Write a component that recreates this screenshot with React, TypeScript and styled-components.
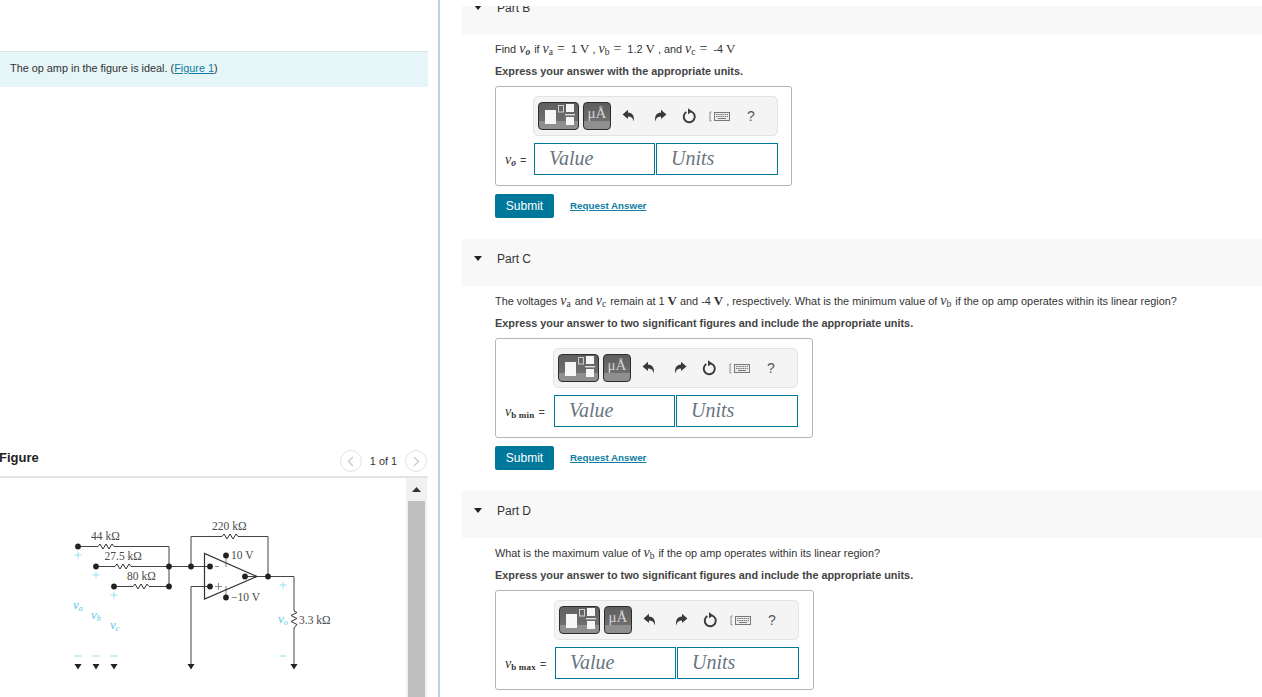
import React from "react";
import styled, { createGlobalStyle } from "styled-components";

const Global = createGlobalStyle`
  html, body { margin: 0; padding: 0; height: 100%; overflow: hidden; background: #fff; }
  #root { height: 697px; }
  * { box-sizing: border-box; }
`;

const Page = styled.div`
  display: flex;
  width: 1262px;
  height: 697px;
  overflow: hidden;
  font-family: "Liberation Sans", Arial, sans-serif;
  color: #333;
`;
const LeftColumn = styled.div`
  flex: none;
  width: 438px;
  display: flex;
  flex-direction: column;
  padding-top: 51px;
`;
const Banner = styled.div`
  width: 428px;
  height: 36px;
  padding: 0 0 4px 10px;
  display: flex;
  align-items: center;
  background: #e6f5f7;
  border-top: 1px solid #dde3e6;
  font-size: 10.86px;
  color: #333;
  white-space: pre;
`;
const FigureLink = styled.a`
  color: #0f7ea3;
  text-decoration: underline;
`;
const FigureHeader = styled.div`
  width: 428px;
  height: 31px;
  margin-top: auto;
  display: flex;
  align-items: center;
  border-bottom: 2px solid #e4e4e4;
`;
const FigureTitle = styled.div`
  font-size: 13px;
  font-weight: 700;
  color: #222;
  flex: 1;
  margin: -9px 0 0 -1px;
`;
const Pager = styled.div`
  display: flex;
  align-items: center;
  font-size: 10.86px;
  color: #333;
  gap: 8px;
  margin: 0 1px 1px 0;
`;
const RoundButton = styled.div`
  width: 22px;
  height: 22px;
  border-radius: 50%;
  border: 1px solid #e2e2e2;
  display: flex;
  align-items: center;
  justify-content: center;
  background: #fff;
`;
const FigureBody = styled.div`
  width: 427px;
  height: 219px;
  display: flex;
`;
const FigureCanvas = styled.div`
  flex: 1;
  overflow: hidden;
`;
const Scrollbar = styled.div`
  flex: none;
  width: 21px;
  background: #f1f1f1;
  display: flex;
  flex-direction: column;
  align-items: center;
`;
const ScrollArrow = styled.div`
  height: 23px;
  display: flex;
  align-items: center;
  justify-content: center;
`;
const ScrollThumb = styled.div`
  flex: 1;
  width: 17px;
  background: #bfbfbf;
`;
const Divider = styled.div`
  flex: none;
  width: 2px;
  background: #bcd2e2;
`;
const RightColumn = styled.div`
  flex: 1;
  padding: 6px 0 0 22px;
  min-width: 0;
`;
const RightClip = styled.div`
  height: 691px;
  overflow: hidden;
`;
const PartHeader = styled.div<{ $first?: boolean }>`
  height: 47px;
  margin-top: ${(p) => (p.$first ? "-18px" : "21px")};
  background: #f8f8f8;
  display: flex;
  align-items: center;
  padding: 0 0 8px 12px;
  gap: 15px;
  font-size: 12px;
  color: #333;
`;
const PartBody = styled.div`
  padding: 0 0 0 33px;
`;
const Question = styled.div<{ $top: number }>`
  margin-top: ${(p) => p.$top}px;
  height: 16px;
  line-height: 16px;
  font-size: 10.86px;
  white-space: nowrap;
  color: #333;
`;
const Instruction = styled.div`
  margin-top: 6px;
  height: 16px;
  line-height: 16px;
  font-size: 10.86px;
  font-weight: 700;
  color: #444;
  white-space: nowrap;
`;
const Serif = styled.span`
  font-family: "Liberation Serif", "Times New Roman", serif;
  font-size: 13px;
  color: #333;
`;
const MathEq = styled(Serif)`
  font-size: 14px;
  margin: 0 3px;
`;
const SerifBold = styled(Serif)`
  font-weight: 700;
`;
const MathVar = styled.span`
  font-family: "Liberation Serif", "Times New Roman", serif;
  font-style: italic;
  font-size: 14px;
  color: #333;
  margin-right: 1px;
`;
const MathSub = styled.sub`
  font-size: 9.5px;
  line-height: 0;
  vertical-align: -2px;
  font-style: normal;
  font-family: "Liberation Serif", serif;
`;
const MathSubItalic = styled(MathSub)`
  font-style: italic;
  font-weight: 700;
`;
const MathSubBold = styled(MathSub)`
  font-size: 9px;
  font-weight: 700;
  letter-spacing: 0.2px;
`;
const AnswerBox = styled.div<{ $width: number; $padRight: number }>`
  margin-top: 7px;
  width: ${(p) => p.$width}px;
  height: 100px;
  border: 1px solid #b5b5b5;
  border-radius: 3px;
  padding: 9px ${(p) => p.$padRight}px 0 9px;
  display: flex;
  flex-direction: column;
  align-items: flex-end;
`;
const Toolbar = styled.div`
  width: 245px;
  height: 40px;
  background: #f4f4f4;
  border: 1px solid #e3e3e3;
  border-radius: 5px;
  display: flex;
  align-items: center;
  padding-left: 4px;
`;
const ToolButton = styled.div<{ $w: number }>`
  width: ${(p) => p.$w}px;
  height: 28px;
  margin-right: 4px;
  border: 1px solid #2d2d2d;
  border-radius: 4px;
  background: linear-gradient(#5f5f5f 0, #6e6e6e 68%, #8f8f8f 68%, #8f8f8f 100%);
  display: flex;
  align-items: flex-start;
  justify-content: center;
  color: #d6d6d6;
  font-family: "Liberation Serif", serif;
  font-size: 15px;
  line-height: 20px;
`;
const ToolIcon = styled.div<{ $w: number }>`
  flex: none;
  width: ${(p) => p.$w}px;
  height: 24px;
  display: flex;
  align-items: center;
  justify-content: center;
  color: #555;
  font-size: 14px;
`;
const InputRow = styled.div`
  margin-top: 7px;
  display: flex;
  align-items: center;
  width: 100%;
`;
const VarLabel = styled.div`
  flex: 1;
  font-size: 10.86px;
  color: #444;
  white-space: nowrap;
  display: flex;
  align-items: center;
  gap: 3px;
  padding-top: 2px;
`;
const ValueField = styled.div<{ $w: number; $gap: number }>`
  width: ${(p) => p.$w}px;
  margin-left: ${(p) => p.$gap}px;
  height: 32px;
  border: 1px solid #00789b;
  padding: 0 0 2px 14px;
  display: flex;
  align-items: center;
  font-family: "Liberation Serif", "Times New Roman", serif;
  font-style: italic;
  font-size: 20px;
  color: #6a7480;
  background: #fff;
`;
const Actions = styled.div`
  margin-top: 8px;
  display: flex;
  align-items: center;
  gap: 16px;
`;
const Submit = styled.div`
  width: 59px;
  height: 24px;
  background: #00789b;
  border-radius: 2px;
  color: #fff;
  font-size: 12px;
  padding-bottom: 1px;
  display: flex;
  align-items: center;
  justify-content: center;
`;
const RequestLink = styled.a`
  font-size: 9.8px;
  font-weight: 700;
  color: #0f7ea3;
  text-decoration: underline;
  margin-top: -2px;
`;

const Caret = () => (
  <svg width="8" height="5" viewBox="0 0 8 5"><path d="M0 0h8L4 5z" fill="#222" /></svg>
);

const TemplateIcon = () => (
  <svg width="34" height="24" viewBox="0 0 34 24">
    <rect x="3" y="7" width="11" height="14" fill="#f6f6f6" />
    <rect x="16.5" y="2.5" width="5" height="6.5" fill="none" stroke="#cfcfcf" />
    <rect x="24" y="1" width="8" height="8" fill="#f6f6f6" />
    <rect x="23" y="11" width="10" height="1.4" fill="#dedede" />
    <rect x="24" y="14" width="8" height="8" fill="#f6f6f6" />
  </svg>
);

const UndoIcon = () => (
  <svg width="13" height="14" viewBox="0 0 12 13">
    <path d="M0.5 5 L5.5 0.8 V3.3 C9 3.3 11.6 5.8 11 11.5 C10 8.2 8.3 7 5.5 7 V9.4 Z" fill="#3a3a3a" />
  </svg>
);
const RedoIcon = () => (
  <svg width="13" height="14" viewBox="0 0 12 13">
    <path d="M11.5 5 L6.5 0.8 V3.3 C3 3.3 0.4 5.8 1 11.5 C2 8.2 3.7 7 6.5 7 V9.4 Z" fill="#3a3a3a" />
  </svg>
);
const ResetIcon = () => (
  <svg width="15" height="16" viewBox="0 0 14 15">
    <path d="M8.2 3.2 A5.2 5.2 0 1 1 4 3.8" fill="none" stroke="#3a3a3a" strokeWidth="1.8" />
    <path d="M5.6 0.2 L9.6 3.2 L5.6 5.8 Z" fill="#3a3a3a" />
  </svg>
);
const KeyboardIcon = () => (
  <svg width="21" height="11" viewBox="0 0 21 11">
    <path d="M2.5 1H1V10H2.5" fill="none" stroke="#8a8a8a" />
    <rect x="5.5" y="1.5" width="15" height="8" fill="#ececec" stroke="#777" />
    <path d="M7 3.5h12M7 5.5h12" stroke="#777" strokeWidth="1" strokeDasharray="1.5 0.7" />
    <path d="M9 7.5h8" stroke="#777" />
  </svg>
);

const Resistor = ({ x, y }: { x: number; y: number }) => (
  <path
    d={`M${x} ${y} l2 -2.5 l3 5 l3 -5 l3 5 l3 -5 l2 2.5`}
    fill="none"
    stroke="#333"
    strokeWidth="1"
  />
);
const Dot = ({ x, y }: { x: number; y: number }) => <circle cx={x} cy={y} r="2.9" fill="#222" />;
const Ground = ({ x }: { x: number }) => <path d={`M${x - 3.5} 664h7l-3.5 5.5z`} fill="#222" />;
const Plus = ({ x, y }: { x: number; y: number }) => (
  <path d={`M${x - 3.5} ${y}h7M${x} ${y - 3.5}v7`} stroke="#8fdcf2" strokeWidth="0.9" />
);
const Minus = ({ x, y }: { x: number; y: number }) => (
  <path d={`M${x - 3.5} ${y}h7`} stroke="#8fdcf2" strokeWidth="1" />
);

const CircuitLabel = styled.text`
  font-family: "Liberation Serif", serif;
  font-size: 11.5px;
  fill: #4a4a4a;
`;
const CircuitVar = styled.text`
  font-family: "Liberation Serif", serif;
  font-style: italic;
  font-size: 13px;
  fill: #58c6ea;
`;
const CircuitSub = styled.tspan`
  font-size: 8px;
`;

const Circuit = () => (
  <svg width="406" height="219" viewBox="0 478 406 219">
    <g fill="none" stroke="#444" strokeWidth="1">
      <path d="M78 546.5H98M114 546.5H169V586.5" />
      <path d="M96 566.5H115M131 566.5H210" />
      <path d="M114 586.5H133M149 586.5H169" />
      <path d="M191 566.5V536.5H222M238 536.5H268V576.5" />
      <path d="M210 586.5H191V664" />
      <path d="M245 576.5H294V611M294 628V664" />
      <path d="M226 555V567M226 586V597" stroke="#888" />
      <path d="M204.5 553.5V599L257 576.5Z" strokeWidth="1.2" stroke="#333" />
    </g>
    <Resistor x={98} y={546.5} />
    <Resistor x={115} y={566.5} />
    <Resistor x={133} y={586.5} />
    <Resistor x={222} y={536.5} />
    <path d="M294 611 l3 1.5 l-6 3 l6 3 l-6 3 l6 3 l-3 3.5" fill="none" stroke="#333" strokeWidth="1" />
    {[
      [78, 546], [96, 566], [114, 586], [169, 566], [169, 586], [191, 566], [210, 566], [210, 586],
      [245, 576], [268, 576], [226, 555], [226, 597],
    ].map(([x, y]) => (
      <Dot key={`${x}-${y}`} x={x} y={y + 0.5} />
    ))}
    {[78, 96, 114, 191, 294].map((x) => (
      <Ground key={x} x={x} />
    ))}
    <Plus x={78} y={555} />
    <Plus x={96} y={575} />
    <Plus x={114} y={595} />
    <Plus x={283} y={585} />
    <Minus x={78} y={656} />
    <Minus x={96} y={656} />
    <Minus x={114} y={656} />
    <Minus x={283} y={656} />
    <path d="M215 566.5h4" stroke="#888" />
    <path d="M215 586.5h7M218.5 583v7" stroke="#888" />
    <CircuitLabel x="91" y="540">44 kΩ</CircuitLabel>
    <CircuitLabel x="104.5" y="560">27.5 kΩ</CircuitLabel>
    <CircuitLabel x="127" y="580">80 kΩ</CircuitLabel>
    <CircuitLabel x="212" y="530">220 kΩ</CircuitLabel>
    <CircuitLabel x="231" y="559">10 V</CircuitLabel>
    <CircuitLabel x="231" y="601">−10 V</CircuitLabel>
    <CircuitLabel x="299" y="624">3.3 kΩ</CircuitLabel>
    <CircuitVar x="73" y="609">v<CircuitSub dy="2">a</CircuitSub></CircuitVar>
    <CircuitVar x="91" y="619">v<CircuitSub dy="2">b</CircuitSub></CircuitVar>
    <CircuitVar x="110" y="629">v<CircuitSub dy="2">c</CircuitSub></CircuitVar>
    <CircuitVar x="278" y="623">v<CircuitSub dy="2">o</CircuitSub></CircuitVar>
  </svg>
);

type AnswerProps = { width: number; padRight: number; label: React.ReactNode; showActions?: boolean };

const Answer = ({ width, padRight, label, showActions = true }: AnswerProps) => (
  <>
    <AnswerBox $width={width} $padRight={padRight}>
      <Toolbar>
        <ToolButton $w={41}><TemplateIcon /></ToolButton>
        <ToolButton $w={28}>μÅ</ToolButton>
        <ToolIcon $w={26}><UndoIcon /></ToolIcon>
        <ToolIcon $w={38}><RedoIcon /></ToolIcon>
        <ToolIcon $w={20}><ResetIcon /></ToolIcon>
        <ToolIcon $w={40}><KeyboardIcon /></ToolIcon>
        <ToolIcon $w={24}>?</ToolIcon>
      </Toolbar>
      <InputRow>
        <VarLabel>{label}</VarLabel>
        <ValueField $w={121} $gap={0}>Value</ValueField>
        <ValueField $w={122} $gap={1}>Units</ValueField>
      </InputRow>
    </AnswerBox>
    {showActions && (
      <Actions>
        <Submit>Submit</Submit>
        <RequestLink href="#">Request Answer</RequestLink>
      </Actions>
    )}
  </>
);

const Vo = () => <MathVar>v<MathSubItalic>o</MathSubItalic></MathVar>;
const Va = () => <MathVar>v<MathSub>a</MathSub></MathVar>;
const Vb = () => <MathVar>v<MathSub>b</MathSub></MathVar>;
const Vc = () => <MathVar>v<MathSub>c</MathSub></MathVar>;

export default function App() {
  return (
    <Page>
      <Global />
      <LeftColumn>
        <Banner>
          The op amp in the figure is ideal. (<FigureLink href="#">Figure 1</FigureLink>)
        </Banner>
        <FigureHeader>
          <FigureTitle>Figure</FigureTitle>
          <Pager>
            <RoundButton>
              <svg width="7" height="11" viewBox="0 0 7 11"><path d="M6 1L1.5 5.5L6 10" fill="none" stroke="#c4ccd2" strokeWidth="1.4" /></svg>
            </RoundButton>
            <span>1 of 1</span>
            <RoundButton>
              <svg width="7" height="11" viewBox="0 0 7 11"><path d="M1 1L5.5 5.5L1 10" fill="none" stroke="#c4ccd2" strokeWidth="1.4" /></svg>
            </RoundButton>
          </Pager>
        </FigureHeader>
        <FigureBody>
          <FigureCanvas><Circuit /></FigureCanvas>
          <Scrollbar>
            <ScrollArrow>
              <svg width="9" height="5" viewBox="0 0 9 5"><path d="M4.5 0L9 5H0z" fill="#333" /></svg>
            </ScrollArrow>
            <ScrollThumb />
          </Scrollbar>
        </FigureBody>
      </LeftColumn>
      <Divider />
      <RightColumn>
        <RightClip>
          <PartHeader $first><Caret />Part B</PartHeader>
          <PartBody>
            <Question $top={6}>
              Find <Vo /> if <Va /><MathEq>=</MathEq> 1 <Serif>V</Serif> , <Vb /><MathEq>=</MathEq> 1.2 <Serif>V</Serif> , and <Vc /><MathEq>=</MathEq> -4 <Serif>V</Serif>
            </Question>
            <Instruction>Express your answer with the appropriate units.</Instruction>
            <Answer width={297} padRight={13} label={<><Vo /> =</>} />
          </PartBody>
          <PartHeader><Caret />Part C</PartHeader>
          <PartBody>
            <Question $top={7}>
              The voltages <Va /> and <Vc /> remain at 1 <SerifBold>V</SerifBold> and -4 <SerifBold>V</SerifBold> , respectively. What is the minimum value of <Vb /> if the op amp operates within its linear region?
            </Question>
            <Instruction>Express your answer to two significant figures and include the appropriate units.</Instruction>
            <Answer width={318} padRight={14} label={<><MathVar>v<MathSubBold>b min</MathSubBold></MathVar> =</>} />
          </PartBody>
          <PartHeader><Caret />Part D</PartHeader>
          <PartBody>
            <Question $top={7}>
              What is the maximum value of <Vb /> if the op amp operates within its linear region?
            </Question>
            <Instruction>Express your answer to two significant figures and include the appropriate units.</Instruction>
            <Answer width={319} padRight={14} label={<><MathVar>v<MathSubBold>b max</MathSubBold></MathVar> =</>} showActions={false} />
          </PartBody>
        </RightClip>
      </RightColumn>
    </Page>
  );
}
